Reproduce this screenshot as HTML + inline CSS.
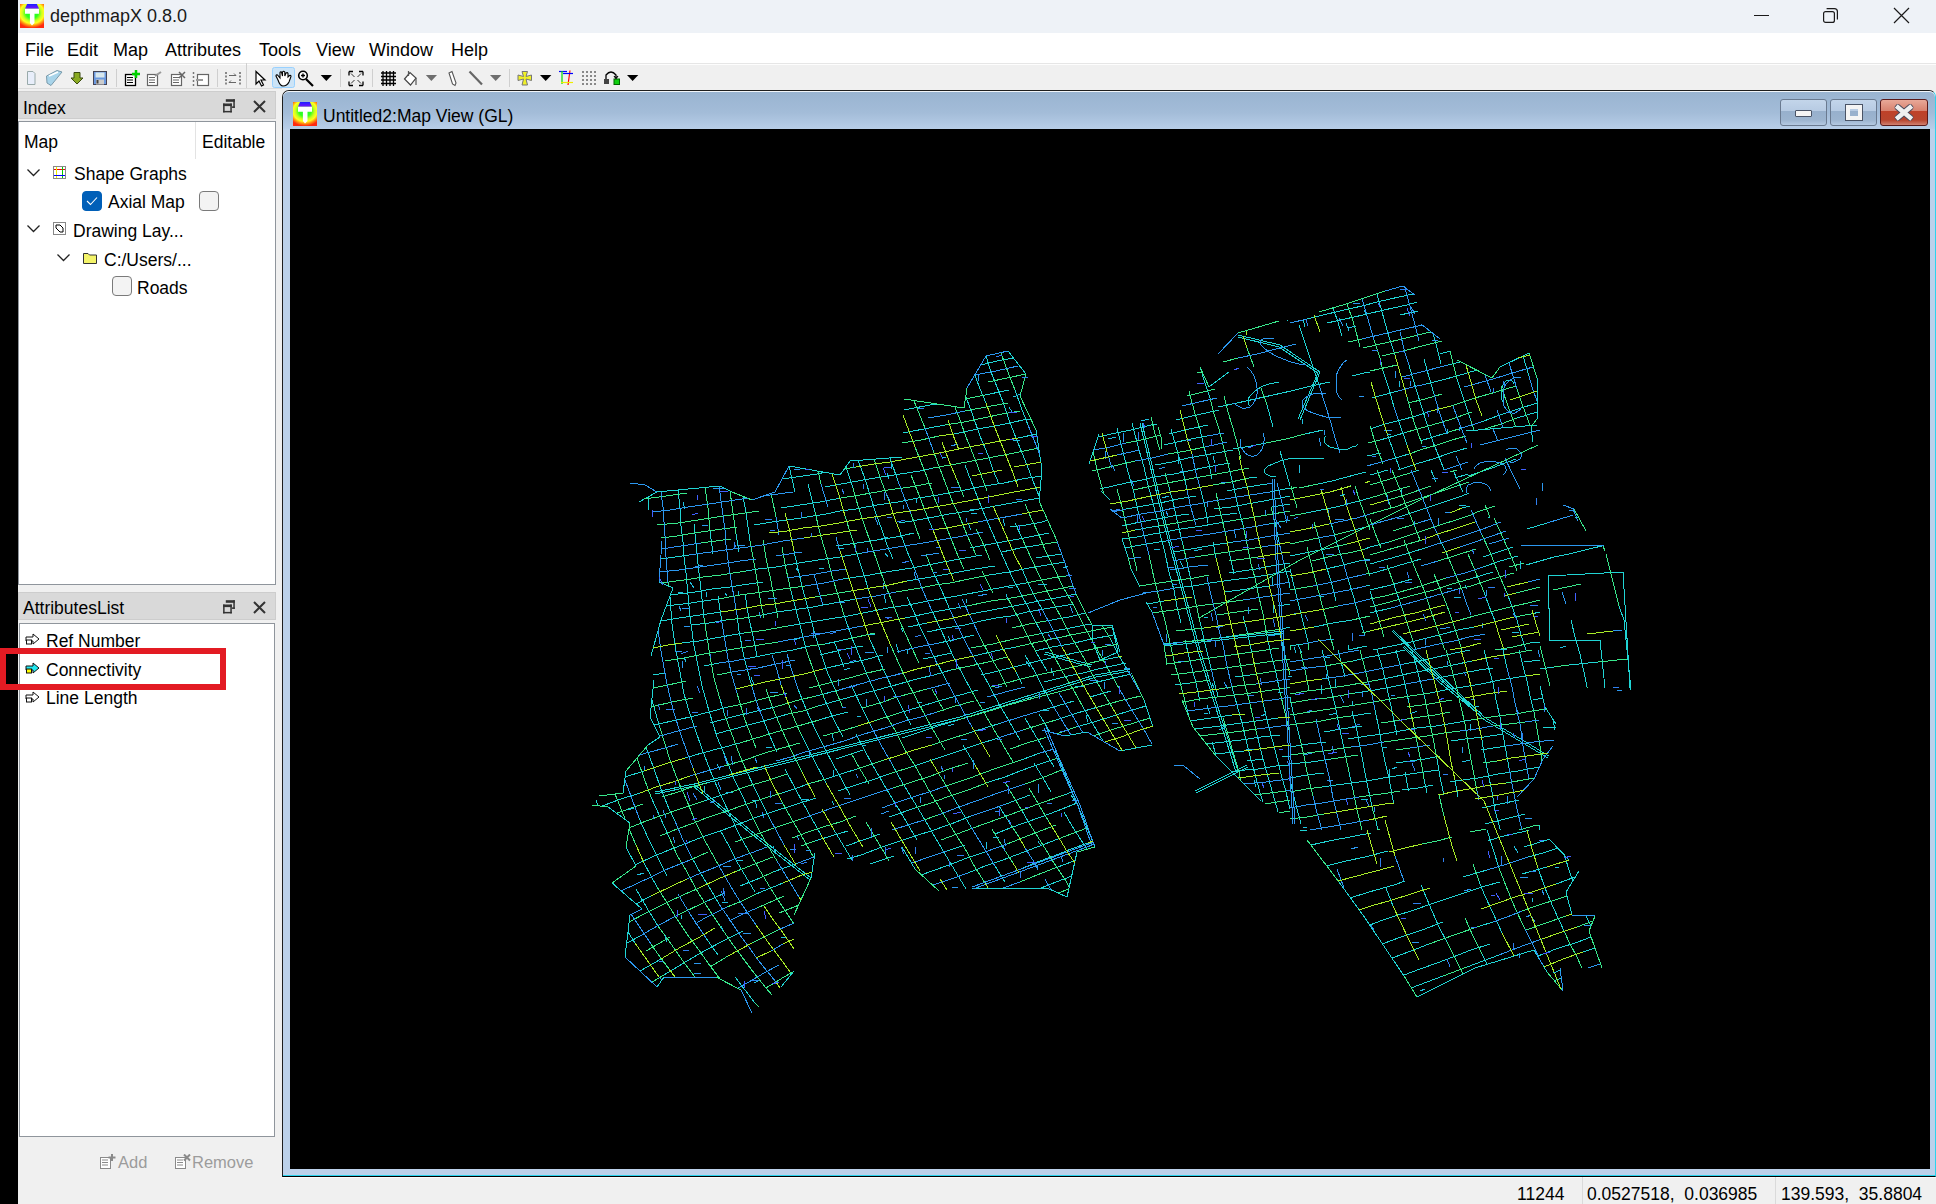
<!DOCTYPE html>
<html><head><meta charset="utf-8">
<style>
*{margin:0;padding:0;box-sizing:border-box}
html,body{width:1936px;height:1204px;overflow:hidden;background:#000;font-family:"Liberation Sans",sans-serif;color:#000}
.a{position:absolute}
.t{position:absolute;font-size:17.5px;line-height:20px;white-space:nowrap;color:#000}
.sep{position:absolute;top:69px;width:1px;height:18px;background:#d0d0d0}
.dd{position:absolute;top:75px;width:0;height:0;border-left:6px solid transparent;border-right:6px solid transparent;border-top:6px solid #000}
.ddg{border-top-color:#6e6e6e}
.chev{position:absolute;width:13px;height:8px}
.cb{position:absolute;width:20px;height:20px;border-radius:4px;border:1px solid #7a7a7a;background:#f3f3f3}
</style></head>
<body>
<!-- app background -->
<div class="a" style="left:18px;top:0;width:1918px;height:1204px;background:#f0f0f0"></div>
<!-- title bar -->
<div class="a" style="left:18px;top:0;width:1918px;height:33px;background:#eef2f7"></div>
<svg class="a" style="left:20px;top:4px" width="24" height="24" viewBox="0 0 24 24"><defs><radialGradient id="ig" gradientUnits="userSpaceOnUse" cx="12" cy="9" r="15" gradientTransform="translate(12 9) scale(1.15 1) translate(-12 -9)"><stop offset="0" stop-color="#20ff20"/><stop offset="0.35" stop-color="#30ff20"/><stop offset="0.55" stop-color="#c8ff20"/><stop offset="0.7" stop-color="#ffff20"/><stop offset="0.85" stop-color="#ff8a10"/><stop offset="1" stop-color="#ff2a10"/></radialGradient><linearGradient id="ip" x1="0" y1="0" x2="0" y2="1"><stop offset="0" stop-color="#1a20ff"/><stop offset="1" stop-color="#7a10ff"/></linearGradient></defs><rect width="24" height="24" fill="url(#ig)"/><path d="M7.1 0H16.9L19 4.8H5Z" fill="url(#ip)"/><path d="M5 4.8H19V9.7H14.5V19L12 21.5L9.9 19V9.7H5Z" fill="#fff"/></svg>
<div class="t" style="left:50px;top:6px;font-size:18px;color:#1a1a1a">depthmapX 0.8.0</div>
<div class="a" style="left:1754px;top:15px;width:15px;height:1px;background:#1a1a1a"></div>
<svg class="a" style="left:1822px;top:7px" width="17" height="17" viewBox="0 0 17 17"><rect x="1.6" y="4.6" width="10.8" height="10.8" rx="2" fill="none" stroke="#1a1a1a" stroke-width="1.2"/><path d="M4.6 1.6H12.4Q15.4 1.6 15.4 4.6V12.4" fill="none" stroke="#1a1a1a" stroke-width="1.2"/></svg>
<svg class="a" style="left:1893px;top:7px" width="17" height="17" viewBox="0 0 17 17"><path d="M1 1L16 16M16 1L1 16" stroke="#1a1a1a" stroke-width="1.2"/></svg>
<!-- menu bar -->
<div class="a" style="left:18px;top:33px;width:1918px;height:31px;background:#fff"></div>
<div class="t" style="left:25px;top:40px;font-size:18px">File</div>
<div class="t" style="left:67px;top:40px;font-size:18px">Edit</div>
<div class="t" style="left:113px;top:40px;font-size:18px">Map</div>
<div class="t" style="left:165px;top:40px;font-size:18px">Attributes</div>
<div class="t" style="left:259px;top:40px;font-size:18px">Tools</div>
<div class="t" style="left:316px;top:40px;font-size:18px">View</div>
<div class="t" style="left:369px;top:40px;font-size:18px">Window</div>
<div class="t" style="left:451px;top:40px;font-size:18px">Help</div>
<!-- toolbar -->
<div class="a" style="left:18px;top:63px;width:1918px;height:1px;background:#e6e6e6"></div><div class="a" style="left:18px;top:64px;width:1918px;height:1px;background:#fdfdfd"></div><div class="a" style="left:18px;top:88px;width:264px;height:1px;background:#dcdcdc"></div>
<svg class="a" style="left:0;top:60px" width="660" height="32" viewBox="0 60 660 32">
<!-- new doc -->
<path d="M27.5 71.5H33L35 73.5V84.5H27.5Z" fill="#e8eefa" stroke="#9aa" stroke-width="1"/>
<!-- open folder -->
<path d="M46.5 76L57 70.5L62 72L51 85.5L47 83Z" fill="#a8d4ea" stroke="#7a9aaa" stroke-width="1"/>
<path d="M49 76L58 72" stroke="#fff" stroke-width="1.5"/>
<!-- green arrow -->
<path d="M74 72.5H80V78H83L77 84L71 78H74Z" fill="#8aaa22" stroke="#3a4a10" stroke-width="1"/>
<!-- floppy -->
<rect x="93.5" y="71.5" width="13" height="13" fill="#6c9ae0" stroke="#445" stroke-width="1"/>
<rect x="95.5" y="72.5" width="9" height="5" fill="#d8e8ee"/>
<rect x="96" y="79.5" width="8" height="5" fill="#ccc"/>
<rect x="96.5" y="80" width="2" height="3.5" fill="#444"/>
<line x1="116.5" y1="69" x2="116.5" y2="87" stroke="#cfcfcf"/>
<!-- doc + -->
<rect x="125.5" y="74.5" width="10" height="11" fill="#fff" stroke="#000" stroke-width="1.3"/>
<path d="M127 77.5H133M127 80H133M127 82.5H133" stroke="#000" stroke-width="1"/>
<path d="M136 70V78M132 74H140" stroke="#00d000" stroke-width="2.5"/>
<!-- doc edit -->
<rect x="147.5" y="74.5" width="10" height="11" fill="#fff" stroke="#666" stroke-width="1.2"/>
<path d="M149 77.5H155M149 80H155M149 82.5H155" stroke="#666" stroke-width="1"/>
<path d="M155 76L161 72" stroke="#999" stroke-width="2"/>
<!-- doc delete -->
<rect x="171.5" y="74.5" width="10" height="11" fill="#fff" stroke="#666" stroke-width="1.2"/>
<path d="M173 77.5H179M173 80H179M173 82.5H179" stroke="#666" stroke-width="1"/>
<path d="M179 72L185 78M185 72L179 78" stroke="#666" stroke-width="1.5"/>
<!-- import -->
<path d="M193.5 72V86" stroke="#777" stroke-width="1.5" stroke-dasharray="2 2"/>
<rect x="197.5" y="74.5" width="11" height="11" fill="#fff" stroke="#666" stroke-width="1.2"/>
<path d="M196 80H203" stroke="#999" stroke-width="2"/>
<line x1="217.5" y1="69" x2="217.5" y2="87" stroke="#cfcfcf"/>
<!-- dotted arrows -->
<path d="M226 72V86M240 72V86" stroke="#666" stroke-width="1.5" stroke-dasharray="2 1.5"/>
<path d="M229 75.5H236L234 73.5M229 82.5H236M229 82.5L231 80.5" fill="none" stroke="#666" stroke-width="1"/>
<line x1="246.5" y1="63" x2="246.5" y2="88" stroke="#cfcfcf"/>
<!-- pointer -->
<path d="M256 71.5V84L259 81L261.5 86L263.5 85L261 80H265Z" fill="#fff" stroke="#000" stroke-width="1.2"/>
<!-- hand highlight -->
<rect x="272.5" y="67.5" width="22" height="20" rx="2" fill="#cce4f7" stroke="#99d1ff"/>
<path d="M278 80L276 76Q276 74.5 277.5 75L280 78V73Q280 71.5 281.5 72L282.5 76V72Q283.5 70.5 284.8 72V76L286 73Q287.5 72 288 73.5V77L289.5 75.5Q291 75 291 76.5L289 82Q287 86 283 86Q280 86 278 80Z" fill="#fff" stroke="#000" stroke-width="1.1"/>
<!-- magnifier -->
<circle cx="303" cy="75.5" r="4.3" fill="#fff" stroke="#000" stroke-width="1.6"/>
<path d="M301 75.5H305M303 73.5V77.5" stroke="#000" stroke-width="1.4"/>
<path d="M306 79L313 86" stroke="#000" stroke-width="2.2"/>
<path d="M320.7 75H332L326.3 81Z" fill="#000"/>
<line x1="340.5" y1="69" x2="340.5" y2="87" stroke="#cfcfcf"/>
<!-- fit -->
<path d="M349 71.5H353M349 71.5V75.5M363 71.5H359M363 71.5V75.5M349 85.5H353M349 85.5V81.5M363 85.5H359M363 85.5V81.5" fill="none" stroke="#000" stroke-width="1.3"/>
<path d="M351 73.5L354.5 77M361 73.5L357.5 77M351 83.5L354.5 80M361 83.5L357.5 80" stroke="#333" stroke-width="1"/>
<line x1="372.5" y1="69" x2="372.5" y2="87" stroke="#cfcfcf"/>
<!-- grid -->
<path d="M383 71V86M386.5 71V86M390 71V86M393.5 71V86M381 73H396M381 76.5H396M381 80H396M381 83.5H396" stroke="#000" stroke-width="1.3"/>
<!-- bucket -->
<path d="M404.5 79L410 72.5L416 78L410.5 85Z" fill="#fff" stroke="#444" stroke-width="1.2"/>
<path d="M408.5 71V76M416 78V85" stroke="#555" stroke-width="1.2"/>
<path d="M425.8 75H437L431.4 81Z" fill="#6e6e6e"/>
<!-- pencil -->
<path d="M449 73L452 71.5L456 83L455 85.5L452.5 84Z" fill="#fff" stroke="#555" stroke-width="1.1"/>
<!-- line -->
<path d="M469.5 71.5L482 84.5" stroke="#666" stroke-width="2.2"/>
<path d="M490 75H501.4L495.7 81Z" fill="#6e6e6e"/>
<line x1="509.5" y1="69" x2="509.5" y2="87" stroke="#cfcfcf"/>
<!-- yellow cross -->
<path d="M522 71.5H527.5L526 76.5L531.5 75V80.5L526 79L527.5 85H522L523.5 79L518 80.5V75L523.5 76.5Z" fill="#f0f028" stroke="#777" stroke-width="1"/>
<path d="M540 75H551.4L545.7 81Z" fill="#000"/>
<!-- axial icon -->
<path d="M559 71.5H567" stroke="#00f" stroke-width="1.2"/><path d="M562 71V84" stroke="#0d0" stroke-width="1.2"/>
<path d="M570 70.5L568 85" stroke="#f00" stroke-width="1.2"/><path d="M561 82.5H573" stroke="#ee0" stroke-width="1.2"/><path d="M563 73.5H573" stroke="#00f" stroke-width="1.2"/>
<!-- dotted grid -->
<g fill="#888"><rect x="582" y="71" width="2" height="2"/><rect x="586" y="71" width="2" height="2"/><rect x="590" y="71" width="2" height="2"/><rect x="594" y="71" width="2" height="2"/>
<rect x="582" y="75" width="2" height="2"/><rect x="586" y="75" width="2" height="2"/><rect x="590" y="75" width="2" height="2"/><rect x="594" y="75" width="2" height="2"/>
<rect x="582" y="79" width="2" height="2"/><rect x="586" y="79" width="2" height="2"/><rect x="590" y="79" width="2" height="2"/><rect x="594" y="79" width="2" height="2"/>
<rect x="582" y="83" width="2" height="2"/><rect x="586" y="83" width="2" height="2"/><rect x="590" y="83" width="2" height="2"/><rect x="594" y="83" width="2" height="2"/></g>
<!-- link -->
<rect x="604" y="79" width="5" height="5" fill="#444"/><rect x="614" y="79" width="5.5" height="5.5" fill="#10d010" stroke="#060"/>
<path d="M606 79V75Q611 69 616 75V78" fill="none" stroke="#000" stroke-width="1.3"/>
<path d="M614 76L616 78.5L618 76" fill="none" stroke="#000" stroke-width="1.2"/>
<path d="M627 75H638.3L632.6 81Z" fill="#000"/>
</svg>


<!-- Index dock -->
<div class="a" style="left:18px;top:91px;width:258px;height:28px;background:#d9d9d9;border:1px solid #cdcdcd"></div>
<div class="t" style="left:23px;top:98px">Index</div>
<svg class="a" style="left:222px;top:98px" width="14" height="16" viewBox="0 0 14 16"><g fill="#333"><rect x="3.8" y="1.2" width="9" height="2.6"/><rect x="11.3" y="1.2" width="1.5" height="8.7"/><rect x="9.8" y="8.4" width="3" height="1.5"/><rect x="1.1" y="5.5" width="8.7" height="2.6"/><rect x="1.1" y="5.5" width="1.5" height="8.9"/><rect x="8.3" y="5.5" width="1.5" height="8.9"/><rect x="1.1" y="12.9" width="8.7" height="1.5"/></g></svg>
<svg class="a" style="left:253px;top:100px" width="13" height="13" viewBox="0 0 13 13"><path d="M1 1L12 12M12 1L1 12" stroke="#333" stroke-width="2"/></svg>
<div class="a" style="left:18px;top:121px;width:258px;height:464px;background:#fff;border:1px solid #8f959c"></div>
<div class="a" style="left:195px;top:122px;width:1px;height:37px;background:#e3e3e3"></div>
<div class="t" style="left:24px;top:132px">Map</div>
<div class="t" style="left:202px;top:132px">Editable</div>
<svg class="chev" style="left:27px;top:169px" viewBox="0 0 13 8"><path d="M0.5 0.5L6.5 6.5L12.5 0.5" fill="none" stroke="#222" stroke-width="1.3"/></svg>
<svg class="a" style="left:53px;top:166px" width="13" height="13" viewBox="0 0 13 13"><rect x="0.5" y="0.5" width="12" height="12" fill="#fff" stroke="#888"/><path d="M1 3.5H12M1 9.5H12" stroke="#e00" stroke-width="1"/><path d="M3.5 1V12" stroke="#ee0" /><path d="M9.5 1V12" stroke="#0c0"/><path d="M1 9.5H12" stroke="#00f"/></svg>
<div class="t" style="left:74px;top:164px">Shape Graphs</div>
<div class="cb" style="left:82px;top:191px;background:#005fb8;border-color:#005fb8"></div>
<svg class="a" style="left:86px;top:196px" width="12" height="10" viewBox="0 0 12 10"><path d="M1 5L4.5 8.5L11 1.5" fill="none" stroke="#fff" stroke-width="1.1"/></svg>
<div class="t" style="left:108px;top:192px">Axial Map</div>
<div class="cb" style="left:199px;top:191px"></div>
<svg class="chev" style="left:27px;top:225px" viewBox="0 0 13 8"><path d="M0.5 0.5L6.5 6.5L12.5 0.5" fill="none" stroke="#222" stroke-width="1.3"/></svg>
<svg class="a" style="left:53px;top:222px" width="13" height="13" viewBox="0 0 13 13"><rect x="0.5" y="0.5" width="12" height="12" fill="#fff" stroke="#888"/><path d="M3 3H7L10 6V10H7L3 6Z" fill="none" stroke="#000" stroke-width="1"/></svg>
<div class="t" style="left:73px;top:221px">Drawing Lay...</div>
<svg class="chev" style="left:57px;top:254px" viewBox="0 0 13 8"><path d="M0.5 0.5L6.5 6.5L12.5 0.5" fill="none" stroke="#222" stroke-width="1.3"/></svg>
<svg class="a" style="left:83px;top:252px" width="15" height="12" viewBox="0 0 15 12"><path d="M0.5 1.5H5L6.5 3H13.5V11.5H0.5Z" fill="#f4f46a" stroke="#333"/></svg>
<div class="t" style="left:104px;top:250px">C:/Users/...</div>
<div class="cb" style="left:112px;top:276px"></div>
<div class="t" style="left:137px;top:278px">Roads</div>

<!-- Attributes dock -->
<div class="a" style="left:18px;top:592px;width:258px;height:28px;background:#d9d9d9;border:1px solid #cdcdcd"></div>
<div class="t" style="left:23px;top:598px">AttributesList</div>
<svg class="a" style="left:222px;top:599px" width="14" height="16" viewBox="0 0 14 16"><g fill="#333"><rect x="3.8" y="1.2" width="9" height="2.6"/><rect x="11.3" y="1.2" width="1.5" height="8.7"/><rect x="9.8" y="8.4" width="3" height="1.5"/><rect x="1.1" y="5.5" width="8.7" height="2.6"/><rect x="1.1" y="5.5" width="1.5" height="8.9"/><rect x="8.3" y="5.5" width="1.5" height="8.9"/><rect x="1.1" y="12.9" width="8.7" height="1.5"/></g></svg>
<svg class="a" style="left:253px;top:601px" width="13" height="13" viewBox="0 0 13 13"><path d="M1 1L12 12M12 1L1 12" stroke="#333" stroke-width="2"/></svg>
<div class="a" style="left:19px;top:623px;width:256px;height:514px;background:#fff;border:1px solid #8f959c"></div>
<svg class="a" style="left:25px;top:633px" width="15" height="13" viewBox="0 0 15 13"><path d="M1 4H8V1L14 6L8 11V8H1Z" fill="#fff" stroke="#111" stroke-width="1"/><rect x="1.5" y="7" width="5" height="4" fill="#fff" stroke="#111"/></svg>
<div class="t" style="left:46px;top:631px">Ref Number</div>
<svg class="a" style="left:25px;top:662px" width="15" height="13" viewBox="0 0 15 13"><path d="M1 4H8V1L14 6L8 11V8H1Z" fill="#22e8f0" stroke="#111" stroke-width="1"/><rect x="1.5" y="7" width="5" height="4" fill="#ff0" stroke="#111"/></svg>
<div class="t" style="left:46px;top:660px">Connectivity</div>
<svg class="a" style="left:25px;top:691px" width="15" height="13" viewBox="0 0 15 13"><path d="M1 4H8V1L14 6L8 11V8H1Z" fill="#fff" stroke="#111" stroke-width="1"/><rect x="1.5" y="7" width="5" height="4" fill="#fff" stroke="#111"/></svg>
<div class="t" style="left:46px;top:688px">Line Length</div>
<!-- Add / Remove -->
<svg class="a" style="left:100px;top:1154px" width="16" height="16" viewBox="0 0 16 16"><rect x="0.5" y="3.5" width="10" height="11" fill="#fff" stroke="#8a8a8a"/><path d="M2 6H8M2 8.5H8M2 11H8" stroke="#8a8a8a"/><path d="M12 0V7M8.5 3.5H15.5" stroke="#8a8a8a" stroke-width="2"/></svg>
<div class="t" style="left:118px;top:1152px;color:#9c9c9c;font-size:16.5px">Add</div>
<svg class="a" style="left:175px;top:1154px" width="16" height="16" viewBox="0 0 16 16"><rect x="0.5" y="3.5" width="10" height="11" fill="#fff" stroke="#8a8a8a"/><path d="M2 6H8M2 8.5H8M2 11H8" stroke="#8a8a8a"/><path d="M9 0.5L15 6.5M15 0.5L9 6.5" stroke="#8a8a8a" stroke-width="2"/></svg>
<div class="t" style="left:192px;top:1152px;color:#9c9c9c;font-size:16.5px">Remove</div>

<!-- MDI window -->
<div class="a" style="left:282px;top:90px;width:1654px;height:1087px;background:#bcd1ea;border-left:1px solid #1e1e1e;border-top:1px solid #1e1e1e;border-right:1px solid #2ad4ee;border-bottom:1px solid #000;border-radius:7px 7px 0 0"></div><div class="a" style="left:283px;top:1175px;width:1653px;height:1px;background:#2ad4ee"></div>
<div class="a" style="left:283px;top:91px;width:1652px;height:38px;background:linear-gradient(#99b4d1,#a3bcd8 55%,#b8cee8);border-radius:6px 6px 0 0;border-top:1px solid #f2f6fa"></div>
<svg class="a" style="left:293px;top:102px" width="24" height="24" viewBox="0 0 24 24"><rect width="24" height="24" fill="url(#ig)"/><path d="M7.1 0H16.9L19 4.8H5Z" fill="url(#ip)"/><path d="M5 4.8H19V9.7H14.5V19L12 21.5L9.9 19V9.7H5Z" fill="#fff"/></svg>
<div class="t" style="left:323px;top:106px">Untitled2:Map View (GL)</div>
<!-- mdi buttons -->
<div class="a" style="left:1780px;top:99px;width:47px;height:27px;border:1px solid #6a7a90;border-radius:3px;background:linear-gradient(#c3d5ea 0%,#b7cbe3 42%,#97b0cc 43%,#9cb4cf 80%,#b4c9e2 100%)"></div>
<div class="a" style="left:1795px;top:110px;width:17px;height:7px;background:#f4f4f4;border:1px solid #4a5466;border-radius:1px"></div>
<div class="a" style="left:1830px;top:99px;width:47px;height:27px;border:1px solid #6a7a90;border-radius:3px;background:linear-gradient(#c3d5ea 0%,#b7cbe3 42%,#97b0cc 43%,#9cb4cf 80%,#b4c9e2 100%)"></div>
<div class="a" style="left:1846px;top:105px;width:16px;height:15px;border:4px solid #f4f4f4;outline:1px solid #4a5466"></div>
<div class="a" style="left:1880px;top:99px;width:48px;height:27px;border:1px solid #5a1a1a;border-radius:3px;background:linear-gradient(#e8a898 0%,#d88370 42%,#bf4128 43%,#b8452e 80%,#d08070 100%)"></div>
<svg class="a" style="left:1893px;top:104px" width="22" height="17" viewBox="0 0 22 17"><path d="M5 3.5L17 13.5M17 3.5L5 13.5" stroke="#4a4a5a" stroke-width="6.5" stroke-linecap="round"/><path d="M5 3.5L17 13.5M17 3.5L5 13.5" stroke="#f0f0f0" stroke-width="4.5" stroke-linecap="square"/></svg>
<div class="a" style="left:290px;top:129px;width:1640px;height:1040px;background:#000"></div>

<!-- status bar -->
<div class="a" style="left:282px;top:1177px;width:1654px;height:1px;background:#fdfdfd"></div>
<div class="a" style="left:1582px;top:1177px;width:1px;height:27px;background:#dadada"></div>
<div class="a" style="left:1775px;top:1177px;width:1px;height:27px;background:#dadada"></div>
<div class="t" style="left:1517px;top:1184px">11244</div>
<div class="t" style="left:1587px;top:1184px">0.0527518,&nbsp; 0.036985</div>
<div class="t" style="left:1781px;top:1184px">139.593,&nbsp; 35.8804</div>

<svg class="a" style="left:0;top:0" width="1936" height="1204" viewBox="0 0 1936 1204"><g fill="none" stroke-width="1" shape-rendering="crispEdges"><path stroke="#20d4d4" d="M981 365L997 361L1013 358M904 410L930 405M930 405L937 404M985 395L1009 390M903 433L929 428M929 428L945 425M954 434L978 429M978 429L1005 424M1005 424L1023 420M1023 420L1031 419M782 479L803 476M803 476L817 474M817 474L826 472M1018 438L1037 434M825 487L847 483L869 479M869 479L894 475M894 475L920 471M920 471L933 468M781 508L800 505L820 502M820 502L841 498M754 525L772 522M772 522L801 518M801 518L826 514M826 514L840 511M840 511L856 509M856 509L877 505L898 502M898 502L918 498L938 495M938 495L965 490M965 490L984 486L1004 483M1004 483L1022 479M1022 479L1041 476M661 559L689 555M899 523L912 521M912 521L934 517M934 517L949 514M949 514L969 511M969 511L995 506M995 506L1012 503M1012 503L1039 498M836 546L857 543L877 540M877 540L896 537L914 533M746 571L758 569M758 569L776 567L793 564M793 564L818 560M818 560L840 557L862 553M1010 527L1026 525L1042 522M1042 522L1048 520M670 595L695 592M695 592L712 589L730 587M730 587L742 585M742 585L763 582M970 548L996 543M996 543L1019 539M1019 539L1034 536L1049 533M666 606L691 603M691 603L704 601M704 601L719 599M843 579L870 575M870 575L886 572M886 572L912 568M912 568L938 563M938 563L960 559L982 555M1002 552L1020 548L1039 545M661 621L679 618M679 618L700 615L721 612M907 581L931 577M931 577L954 573M954 573L975 569L995 566M1036 558L1061 554M692 625L709 623L726 620M762 615L777 612L792 610M792 610L813 607L834 603M834 603L855 599M989 575L1009 572L1029 568M1029 568L1059 563M1059 563L1064 562M682 643L699 641L715 638M715 638L744 633M788 626L805 623L823 620M823 620L848 616M848 616L868 612L888 608M888 608L908 605L928 601M928 601L957 596M957 596L983 591M983 591L1004 587L1026 583M1066 576L1069 575M905 618L934 612M934 612L950 609L967 606M653 675L665 673M704 666L719 663M750 658L775 653M775 653L793 650M793 650L810 646M825 644L848 639M908 627L927 623M971 614L992 610M992 610L1014 606M1014 606L1034 602M1034 602L1056 598M1056 598L1076 594M820 655L841 650L863 646M927 632L946 628L965 625M965 625L981 621M981 621L996 618L1011 616M1011 616L1027 612M1027 612L1056 607M1056 607L1074 604M823 669L844 664M844 664L864 660L883 655M939 643L957 639L974 635M1046 621L1069 617M1069 617L1085 613M1085 613L1086 613M654 725L672 721L690 717M690 717L709 712L728 707M923 659L952 653M1039 634L1054 631L1070 628M1070 628L1085 625M1085 625L1091 624M710 723L732 717M732 717L753 712L775 707M816 696L839 690M974 656L995 651L1016 647M715 734L734 729M734 729L752 724M752 724L764 721M764 721L788 714M818 706L836 701L854 696M854 696L873 691L892 686M892 686L913 680L934 675M934 675L951 670M1035 651L1052 647L1070 644M1070 644L1087 640M1087 640L1113 635M1113 635L1115 634M625 777L644 771M685 758L702 753M702 753L721 748L740 743M819 720L832 716M832 716L848 712M981 675L994 672M994 672L1014 667L1034 662M1034 662L1060 656M1060 656L1084 651M602 806L621 799L640 793M899 713L919 707M919 707L935 702M935 702L960 695M960 695L978 690M1103 660L1118 657M1044 682L1068 676M1068 676L1083 673L1098 669M1098 669L1126 663M704 801L731 792M836 759L863 750M902 738L920 732L938 726M938 726L958 720M1089 684L1110 679L1131 674M1131 674L1131 673M782 793L797 788L811 783M826 779L841 774M841 774L857 769M969 733L985 728L1001 723M1040 711L1057 706L1074 701M1090 697L1111 691M635 865L652 857L669 850M669 850L687 843L705 836M705 836L720 831M720 831L739 824M739 824L757 817M757 817L775 811L794 805M794 805L816 798M838 791L856 785M856 785L872 780L889 774M911 767L935 759M935 759L956 752L976 745M976 745L998 738M1056 720L1077 713L1098 707M1076 727L1094 722L1113 716M1113 716L1129 711L1146 706M636 904L651 896M1021 760L1040 753M815 841L831 836L848 831M889 817L915 808M989 782L1005 777L1020 771M1020 771L1034 766M1034 766L1052 760M627 943L640 936M705 902L725 893M740 886L760 878M773 872L798 863M846 846L863 840L880 834M756 894L783 883M847 859L861 855M861 855L882 847M882 847L900 841L918 835M918 835L931 831M931 831L951 824L971 816M1006 804L1030 795M640 971L661 959M870 864L894 856M1064 795L1072 792M664 975L687 961M687 961L706 950L725 940M725 940L743 931M947 851L965 845M995 834L1010 828L1024 823M1024 823L1041 817L1057 811M1057 811L1077 803M921 875L949 865M949 865L967 858L985 852M968 873L985 866M985 866L1003 860M1003 860L1016 855M1016 855L1037 847L1058 839M1021 869L1037 862L1054 856M1054 856L1071 849L1088 843M1055 868L1074 861M1041 888L1056 882L1072 876M628 932L635 943M613 882L615 886M596 800L598 806M636 889L647 908L658 926M644 863L657 887M639 818L648 838L658 858M658 858L667 876M706 938L718 955M735 977L745 990L755 1003M651 797L660 817L669 837M646 747L654 769M654 769L661 789L669 809M669 809L675 821M692 858L701 874L711 890M711 890L719 904M652 700L660 728M648 497L649 510M720 830L729 846L737 862M737 862L746 877L755 892M670 597L672 624M672 624L676 651M676 651L680 672L684 694M684 694L689 711L695 729M695 729L702 749L710 770M710 770L720 794M720 794L733 821M733 821L738 832M738 832L748 850M678 490L680 508L681 526M681 526L683 542L684 557M684 557L686 573M686 573L688 595L690 616M690 616L694 646M694 646L698 666L702 686M702 686L709 711M709 711L717 737M717 737L723 751L729 766M729 766L734 779M734 779L742 795L749 810M694 524L696 544L698 564M698 564L700 581L702 599M702 599L704 618M720 699L725 716M747 772L755 789M755 789L764 807M764 807L770 819M710 531L713 554M718 596L722 623M737 615L739 631M739 631L744 657M744 657L748 672L752 687M763 719L772 741M772 741L777 752M785 769L796 790M796 790L803 803M803 803L812 819L821 835M736 534L739 552M745 594L749 619M749 619L753 636M753 636L757 656M834 830L843 845L852 860M743 497L746 512L748 527M748 527L750 541M802 736L813 758M813 758L826 783M798 689L806 709L815 729M815 729L824 747L834 766M834 766L842 780L850 795M791 591L796 610M796 610L801 629L806 649M824 698L833 718L843 737M794 551L798 569L802 586M802 586L806 601L810 616M810 616L816 638L823 659M823 659L828 674L835 689M856 734L864 749L872 764M872 764L883 783M883 783L893 800L903 816M903 816L917 840M789 466L795 492M834 641L844 667M851 685L863 710M863 710L871 726M892 764L902 782L913 800M913 800L922 815M922 815L932 832L942 849M942 849L954 869M954 869L966 889M808 484L815 512M844 615L852 638M852 638L861 660M861 660L868 677L876 695M876 695L887 717M870 640L877 655L884 671M884 671L895 694M895 694L903 710L911 725M953 797L965 817M965 817L971 827M995 866L1005 882M857 554L863 572L869 591M846 467L853 488M963 745L975 765M999 806L1011 825M858 460L865 479L871 498M871 498L876 514L882 530M882 530L887 545L893 559M907 597L914 612L920 627M920 627L926 639M933 655L946 680M1021 809L1029 823M900 532L907 551L915 570M932 611L940 628L948 645M948 645L955 660L963 675M963 675L971 690M890 458L898 481M933 572L942 591L950 610M975 660L982 672M982 672L990 687L998 702M998 702L1009 721L1020 740M1034 763L1043 778L1051 792M1064 812L1072 826L1081 840M1081 840L1087 849M927 516L933 530M1025 718L1035 735L1046 753M1046 753L1054 767M1071 795L1079 807M1016 672L1022 684M1039 714L1050 732M1025 655L1035 672M1035 672L1043 688L1052 704M1036 652L1047 671M965 465L971 481L977 496M977 496L983 511M983 511L988 523M988 523L996 541L1004 559M1004 559L1012 577L1021 594M1021 594L1030 611M1030 611L1043 636M1083 707L1090 719M1090 719L1103 741M1022 569L1028 583L1035 597M1035 597L1042 609M966 397L973 416M973 416L980 436L988 455M988 455L993 470L999 484M1015 523L1022 538M975 375L980 389L986 403M986 356L991 372L997 387M997 387L1003 402L1008 417M1008 417L1014 433L1020 448M1020 448L1027 465L1033 481M1033 481L1039 496M1111 640L1119 656M1119 656L1127 669M1015 390L1021 407L1028 425M1287 321L1287 320M1098 437L1111 434M1111 434L1131 430L1151 425M1151 425L1157 424M1176 420L1192 416M1192 416L1206 413M1206 413L1219 410M1169 434L1189 429L1208 425M1164 445L1186 440L1207 436M1155 465L1172 462L1188 458M1188 458L1205 455M1205 455L1233 450M1100 489L1126 483M1126 483L1142 480M1142 480L1154 477M1154 477L1174 474M1174 474L1188 471M1188 471L1207 467M1207 467L1230 463M1249 478L1257 477M1126 509L1143 506L1160 503M1160 503L1178 499L1196 496M1227 491L1247 487L1267 484M1270 492L1290 488M1122 526L1140 522L1157 519M1157 519L1173 516L1189 514M1214 509L1231 507L1247 504M1247 504L1264 501L1280 498M1280 498L1290 496M1135 530L1158 526M1193 520L1215 516L1237 513M1272 507L1290 504M1122 539L1137 537M1137 537L1159 533L1181 529M1181 529L1202 526M1202 526L1230 521M1125 548L1146 544L1166 541M1269 524L1290 520M1174 552L1191 549L1208 546M1208 546L1233 542M1229 573L1256 569M1256 569L1276 565M1276 565L1290 563M1175 588L1193 586L1210 583M1210 583L1231 580M1231 580L1248 578M1248 578L1261 576M1261 576L1290 571M1147 604L1164 601M1225 592L1247 589L1269 586M1278 606L1290 604M1219 638L1239 635M1282 629L1290 627M1175 685L1190 683M1235 677L1250 675M1190 721L1211 718L1232 715M1287 708L1290 708M1195 729L1220 726M1220 726L1234 724M1234 724L1256 721L1278 718M1207 744L1224 742L1241 740M1241 740L1261 737L1280 735M1215 754L1244 751M1247 761L1264 759M1282 757L1290 756M1232 772L1245 770M1245 770L1258 769M1258 769L1276 766M1276 766L1290 765M1288 779L1290 778M1117 428L1122 448L1127 468M1127 468L1133 489M1133 489L1139 515M1186 705L1189 717M1132 423L1139 450M1139 450L1144 467L1148 485M1148 485L1153 503L1158 522M1158 522L1160 534M1160 534L1165 553M1165 553L1169 572L1174 590M1174 590L1177 607L1181 623M1185 640L1190 661L1196 683M1196 683L1200 701M1212 742L1216 755M1169 487L1173 502M1173 502L1178 524L1183 545M1187 562L1191 581L1195 599M1200 622L1206 648M1206 648L1211 668M1214 681L1218 696M1171 429L1177 450L1183 471M1183 471L1187 490M1232 687L1237 705L1242 723M1242 723L1246 740L1250 756M1250 756L1255 774L1260 793M1260 793L1263 802M1201 491L1205 507L1208 523M1213 542L1216 558M1257 735L1261 751L1265 766M1265 766L1271 787L1277 808M1277 808L1278 812M1200 429L1204 447L1209 464M1209 464L1212 479M1229 551L1234 574M1243 616L1248 635L1252 653M1263 703L1268 724L1274 746M1274 746L1281 774M1281 774L1285 788M1285 788L1290 809M1200 367L1205 383L1210 398M1229 468L1234 488M1234 488L1238 507L1243 525M1267 636L1271 654M1271 654L1276 673L1280 692M1281 638L1287 663M1276 527L1279 542M1284 564L1288 578M1288 578L1290 588M1307 319L1319 316M1319 316L1340 311L1362 306M1362 306L1377 302M1377 302L1399 297M1399 297L1413 294M1327 323L1345 319L1363 315M1363 315L1384 310M1384 310L1407 305M1407 305L1417 302M1400 315L1418 311M1440 354L1450 351M1448 365L1460 362M1372 398L1398 391M1426 384L1442 380L1457 376M1457 376L1477 370M1370 429L1385 424L1401 420M1401 420L1416 416L1431 411M1380 440L1394 436M1394 436L1407 432M1367 456L1381 453M1420 441L1446 433M1481 422L1500 415L1518 409M1518 409L1537 403M1392 459L1409 454M1517 418L1537 412M1398 470L1416 464L1433 459M1433 459L1450 453L1467 448M1303 319L1305 327M1333 308L1338 322M1338 322L1342 336M1388 436L1394 453L1400 470M1383 371L1389 389L1394 407M1398 419L1407 445M1377 294L1384 319M1384 319L1389 337L1395 355M1409 365L1413 379M1413 379L1421 405M1421 405L1427 424L1433 442M1433 442L1443 467M1443 467L1444 470M1424 359L1429 377L1434 394M1433 333L1438 352M1438 352L1441 364M1457 379L1464 400L1471 421M1523 356L1529 376M1306 513L1336 507M1336 507L1359 501M1359 501L1370 498M1350 531L1370 526M1290 556L1310 552L1330 548M1365 549L1370 547M1326 569L1343 565L1359 561M1359 561L1370 559M1366 586L1370 585M1314 627L1333 623L1352 620M1290 646L1303 644M1348 650L1367 646M1290 569L1294 586L1298 602M1298 602L1303 622L1308 642M1319 539L1325 562M1325 562L1331 581L1336 601M1348 645L1349 650M1331 523L1338 547M1338 547L1344 565M1348 579L1354 598M1354 598L1359 617L1365 636M1370 475L1388 470M1410 473L1419 470M1455 478L1468 474M1399 517L1420 510M1420 510L1441 503L1462 496M1462 496L1469 493M1462 508L1470 506M1370 547L1389 542M1488 517L1490 517M1370 564L1388 559L1406 554M1406 554L1428 547M1370 574L1397 566M1397 566L1421 559M1575 518L1578 517M1370 590L1391 585L1412 579M1483 557L1498 552L1513 547M1483 567L1500 561L1518 556M1470 579L1493 572M1370 613L1391 608M1373 650L1392 646L1411 642M1411 642L1427 638L1443 634M1443 634L1458 630L1474 627M1531 614L1540 612M1530 643L1540 642M1370 591L1378 617M1394 585L1402 608M1413 641L1416 650M1440 540L1446 552M1431 470L1436 482M1484 592L1489 606L1495 621M1453 470L1463 492M1507 593L1517 620M1517 620L1521 635L1526 650M1353 661L1369 657L1386 654M1386 654L1405 650M1404 664L1420 661L1437 657M1437 657L1460 652M1460 652L1470 650M1378 680L1393 677M1393 677L1411 673M1411 673L1433 669M1433 669L1453 665L1472 661M1355 693L1375 690M1375 690L1391 687L1406 684M1438 678L1458 674L1479 670M1479 670L1493 668M1524 662L1540 660M1430 693L1450 689M1450 689L1463 687M1463 687L1481 684L1500 680M1500 680L1526 676M1351 716L1371 713M1324 732L1341 729M1341 729L1362 726M1533 700L1543 698M1290 747L1308 744L1326 742M1348 739L1367 736M1367 736L1383 734M1383 734L1400 731L1417 728M1417 728L1436 726L1454 723M1454 723L1471 720M1290 764L1311 762L1331 759M1451 741L1465 739M1465 739L1484 737L1503 734M1543 728L1556 727M1290 778L1307 775L1324 773M1396 763L1410 761M1410 761L1425 759L1440 756M1481 750L1506 746M1322 787L1351 783M1351 783L1367 781L1383 778M1383 778L1403 775L1424 772M1424 772L1439 770M1402 790L1418 788L1433 785M1450 782L1463 780M1463 780L1478 778M1478 778L1498 774L1518 771M1518 771L1539 767M1482 808L1500 804L1519 800M1519 800L1519 800M1485 824L1505 819L1525 814M1290 780L1295 801M1295 801L1301 824M1290 697L1293 712L1297 727M1297 727L1300 739M1322 650L1326 665L1329 681M1329 681L1335 705M1335 705L1340 730M1340 730L1346 758M1349 772L1353 790M1338 650L1345 677M1352 711L1357 731L1361 752M1361 752L1366 778M1366 778L1372 807M1376 821L1378 830M1375 710L1379 729L1382 747M1382 747L1385 762L1389 778M1389 778L1393 800M1393 800L1394 803M1377 650L1383 670M1383 670L1389 697M1389 697L1392 711M1392 711L1397 735M1405 772L1408 788M1408 788L1408 791M1396 650L1400 665L1404 680M1404 680L1409 703M1424 779L1427 793M1412 650L1418 673M1418 673L1425 699M1437 759L1440 777L1444 795M1455 780L1458 797M1482 740L1484 753M1484 753L1488 773L1492 792M1492 792L1495 810L1500 829M1500 829L1500 830M1484 650L1488 666M1488 666L1493 683L1496 700M1496 700L1500 717L1503 735M1503 735L1506 751L1509 768M1503 650L1507 668M1539 825L1540 830M1519 650L1523 666L1527 681M1527 681L1530 696L1534 712M1553 720L1555 730M1300 831L1307 830M1311 845L1329 841M1329 841L1350 837L1371 833M1326 866L1346 861L1365 857M1365 857L1388 851M1488 841L1500 837M1500 837L1526 831M1526 831L1529 830M1350 898L1369 892M1369 892L1394 885M1394 885L1405 881M1524 847L1550 839M1463 877L1487 870M1528 857L1543 853L1558 848M1370 925L1383 920M1383 920L1395 916M1395 916L1414 910L1434 903M1434 903L1452 897L1470 891M1470 891L1485 886L1500 882M1522 874L1547 867M1382 944L1401 937M1401 937L1422 930L1443 922M1556 884L1575 877M1392 958L1411 951L1429 944M1480 926L1493 922M1404 975L1420 969L1437 963M1437 963L1453 957M1453 957L1471 950M1471 950L1490 944M1411 988L1427 982L1443 976M1467 967L1483 961L1499 955M1538 956L1556 949M1556 949L1578 942M1578 942L1591 937M1583 952L1595 948M1554 981L1561 978M1386 888L1393 906M1421 885L1432 911M1432 911L1439 927L1447 942M1482 954L1487 964M1479 881L1484 894M1484 894L1493 913L1502 933M1487 830L1493 849L1499 868M1538 868L1545 888L1553 907M1553 907L1565 933M1564 854L1571 876M1571 876L1573 881M1586 916L1591 926M1218 407L1237 403L1255 399M1255 399L1273 395L1291 391M1291 391L1311 386L1330 382M1352 376L1364 373M1364 373L1370 372M1233 449L1251 446M1251 446L1266 443M1305 434L1323 430M1318 484L1332 481M1332 481L1358 474M1358 474L1366 472M1267 405L1273 427M1280 451L1285 468L1290 486M1299 325L1307 349M1307 349L1313 367L1319 385M1468 476L1492 468M1492 468L1516 459M1527 529L1547 523M1526 565L1554 557M1554 557L1569 554M1569 554L1593 548M1593 548L1602 546M1540 669L1554 667M1569 665L1598 662M1571 620L1575 637L1580 654M1580 654L1584 672M1584 672L1587 687M639 502L657 492M657 492L720 486M720 486L732 492M789 466L840 475M840 475L850 461M850 461L902 457M1008 351L1026 374M1036 430L1042 470M1042 470L1039 501M1112 625L1120 652M1144 700L1153 727M1152 745L1120 751M1087 732L1065 736M1055 750L1095 847M1077 852L1067 897M1067 897L1047 888M1047 888L972 888M915 869L902 847M815 853L811 878M794 971L781 987M664 977L657 987M625 957L630 915M642 909L612 883M636 866L626 847M630 823L608 807M623 793L626 771M648 745L660 737M660 737L650 717M650 717L654 680M651 656L661 620M661 620L673 588M673 588L659 582M1089 464L1099 434M1209 387L1229 372M1500 367L1529 353M1537 378L1537 419M1531 427L1533 442M1619 606L1624 620M1624 620L1631 690M1540 686L1545 707M1545 707L1556 724M1550 840L1569 860M1579 871L1566 892M1566 892L1572 915M1547 972L1534 950M1534 950L1475 968M1475 968L1417 997M1404 976L1365 918M1365 918L1339 882M1261 801L1216 756M1152 612L1146 602M1140 587L1131 569M1128 557L1122 539M1110 500L1101 491M655 792L694 784L960 717L1095 675L1130 669M655 794L694 786L961 719L1096 677L1130 671M694 784L750 830L811 878M693 786L749 832L810 880M1045 652L1070 659L1092 665M1044 654L1069 661L1091 667M1092 625L1112 625L1118 652L1100 660L1092 640L1092 625M1142 423L1165 520L1200 650L1238 771M1140 423L1163 520L1198 651L1236 772M1164 644L1220 638L1283 631M1164 646L1220 640L1283 633M1393 630L1484 717L1549 756M1392 631L1483 719L1548 758M1195 791L1247 765M1196 793L1248 767M1404 646L1440 680L1482 714M1403 647L1439 682L1481 716M1238 335L1280 345L1320 372L1300 420M1238 337L1279 347L1318 373L1298 419M1358 444L1356 446L1352 447L1348 449L1343 449L1339 449L1334 448L1330 447L1327 445L1325 443L1324 441L1324 438L1326 436M1250 406L1248 404L1248 402L1248 399L1251 395L1254 392L1258 389L1263 386L1269 384L1274 383L1279 382M1276 477L1270 476L1266 474L1264 472L1265 469L1268 466L1273 464L1280 461L1288 459L1298 458L1307 458L1316 458L1324 459M1504 403L1503 402L1502 400L1501 397L1501 394L1501 391L1502 388L1503 385L1504 383L1506 381L1508 380L1510 380L1512 381L1513 382L1514 384M1466 431L1537 425M1548 576L1623 572L1630 688M1548 576L1550 640L1600 640L1605 688"/><path stroke="#38e88c" d="M1013 358L1013 358M988 382L1007 378L1026 374M965 399L985 395M965 411L986 407L1008 403M945 425L964 422M964 422L983 418L1002 414M1002 414L1020 411M902 443L921 440L939 436M644 499L666 496L687 493M844 469L856 467M933 468L950 465L967 462M967 462L988 458L1009 454M1009 454L1024 451L1039 448M657 525L678 523L698 520M698 520L717 517M717 517L738 514L759 511M841 498L860 495M860 495L888 490M888 490L910 487L932 483M661 538L677 536L694 533M694 533L715 530L737 527M701 543L716 541L731 539M662 583L691 579M691 579L703 577M703 577L721 575M721 575L746 571M719 599L740 595L762 592M762 592L783 589L805 586M1039 545L1057 542M815 597L833 594L851 591M726 620L744 618L762 615M896 592L920 588M920 588L935 585L950 583M950 583L969 579L989 575M744 633L766 630L788 626M1026 583L1052 578M1052 578L1066 576M665 661L684 658M684 658L704 654M704 654L722 651L740 648M740 648L759 645L778 642M967 606L991 601M991 601L1006 599L1022 596M1022 596L1042 592M1042 592L1058 589L1073 586M810 646L825 644M848 639L875 633M653 688L668 685M668 685L686 681M717 675L732 672M651 707L672 702L693 698M1012 628L1029 624M1029 624L1046 621M728 707L743 704L758 700M758 700L787 693M809 688L829 683L849 678M849 678L867 673L885 669M971 648L993 644L1014 639M1014 639L1039 634M775 707L795 701L816 696M1016 647L1038 642M1038 642L1057 638M1057 638L1081 633M1081 633L1096 630L1112 627M788 714L803 711L818 706M951 670L970 666L988 662M988 662L1007 657M740 743L763 736M763 736L776 732M776 732L798 726L819 720M862 708L880 703L897 697M897 697L912 693L927 689M1084 651L1102 647M1102 647L1118 644M724 766L745 760L765 753M765 753L782 748L800 743M823 736L845 730M845 730L858 726M874 721L899 713M991 687L1006 683L1021 679M1021 679L1042 674M1042 674L1061 670M1061 670L1082 665L1103 660M617 813L643 804M662 797L678 792M678 792L692 787L707 783M937 712L955 706L974 701M629 828L646 821L663 815M663 815L683 808L704 801M731 792L748 786L766 781M766 781L787 774M958 720L975 715L993 710M993 710L1008 705L1023 701M1023 701L1038 697L1054 693M1054 693L1070 689M1070 689L1089 684M660 836L677 829L694 823M694 823L706 818M706 818L727 811M727 811L747 804M747 804L765 798L782 793M811 783L826 779M857 769L884 760M932 745L950 739L969 733M889 774L911 767M1023 730L1039 725L1056 720M1098 707L1119 701L1141 696M1141 696L1142 695M690 860L708 852M735 842L760 833M760 833L780 826L801 819M893 788L912 782L931 776M931 776L949 769L968 763M1010 749L1027 743L1044 738M1044 738L1046 737M1056 734L1076 727M792 838L808 832L823 827M823 827L840 822L856 816M946 786L970 778M970 778L994 769M994 769L1021 760M1093 736L1114 729L1134 723M1134 723L1150 718M629 922L648 912L668 902M668 902L683 895L699 888M737 871L755 864L773 857M801 846L815 841M915 808L931 803L947 797M947 797L968 790L989 782M1052 760L1058 758M678 915L705 902M760 878L773 872M924 820L938 815M1025 784L1042 778L1059 771M1059 771L1063 770M646 951L670 937M727 907L742 901L756 894M757 908L784 896M941 840L957 834M957 834L973 828M973 828L1001 818M1001 818L1020 811L1038 804M1038 804L1064 795M652 982L664 975M779 913L799 905M710 967L728 956M752 943L778 930M1007 844L1030 835M1030 835L1056 825M1058 839L1079 831M1079 831L1087 828M766 988L784 977M784 977L793 972M1020 882L1037 875L1055 868M1058 893L1069 889M651 944L660 957M660 957L669 969M658 926L667 938L676 951M676 951L685 964L695 977M615 794L622 811M622 811L625 819M629 829L636 845M657 887L664 898M664 898L677 919M677 919L689 937M689 937L699 950L708 963M708 963L720 979M755 1003L759 1007M637 758L644 778L651 797M669 837L677 855L687 872M687 872L696 889M696 889L708 908L720 926M720 926L731 942L742 957M742 957L754 973L766 988M766 988L772 995M660 728L665 744L670 760M670 760L678 781M678 781L687 801M687 801L695 821L705 841M705 841L719 866M790 972L791 974M668 583L669 586M748 850L759 869L771 889M771 889L778 900M778 900L794 924M749 810L760 832M760 832L768 846L777 861M704 618L707 637L710 656M710 656L714 678L720 699M725 716L734 740M734 740L740 756L747 772M705 487L708 508M708 508L710 531M737 693L745 720M745 720L756 748M781 800L791 818L801 835M801 835L814 858M730 491L733 513L736 534M766 689L773 709M773 709L782 730L791 750M791 750L802 772M750 541L755 568M755 568L758 586L761 604M761 604L764 618M789 705L795 721L802 736M763 540L766 558L770 576M770 576L774 597L778 618M866 822L873 834M873 834L881 847L889 861M771 493L776 517M782 547L786 569L791 591M806 649L814 672M814 672L824 698M851 753L860 769L869 784M835 689L843 708M815 512L819 529M819 529L823 544M823 544L828 560L832 576M832 576L838 595L844 615M887 717L895 730M895 730L905 750M905 750L914 764L922 778M922 778L931 794L941 810M941 810L953 830M953 830L967 852M967 852L973 864M973 864L985 883M818 471L821 484M939 774L953 797M845 516L851 535L857 554M891 646L899 664M899 664L907 681L916 698M916 698L927 719M927 719L936 735L945 750M992 829L1002 846L1013 863M853 488L858 506L864 524M864 524L871 544L878 564M878 564L885 584L893 604M893 604L900 622M900 622L911 646M911 646L919 663M932 689L944 711M1011 825L1019 837M1005 782L1013 796M1013 796L1021 809M1029 823L1043 845M1043 845L1054 863L1066 881M1066 881L1069 887M874 459L881 480L889 501M971 690L982 709L993 728M993 728L1003 745L1013 762M1029 788L1039 805L1049 822M911 514L920 539M926 554L933 572M911 475L919 495L927 516M980 637L990 656M990 656L999 671L1007 687M915 447L921 462L927 477M927 477L934 497L942 516M942 516L950 536L958 556M958 556L964 569M914 401L925 428M933 450L937 461M937 461L945 482L953 503M953 503L959 515M959 515L967 535L976 555M982 571L993 593M957 480L964 497M976 529L982 541M982 541L990 560M1006 595L1020 621M1020 621L1028 637L1036 652M1043 636L1053 654L1062 671M1062 671L1073 689L1083 707M955 407L960 420M960 420L966 437L973 454M973 454L978 467M978 467L987 491M1022 538L1031 558L1040 577M1040 577L1050 597L1061 617M1061 617L1068 631L1076 645M1076 645L1084 658L1091 672M1091 672L1101 689L1112 707M1025 504L1032 520M1032 520L1039 535L1045 550M1045 550L1055 570M1055 570L1063 587M1063 587L1074 606L1084 626M1084 626L1093 642L1102 658M1102 658L1111 674L1120 690M1102 625L1111 640M1001 353L1009 375M1009 375L1015 390M1197 373L1202 372M1187 396L1215 389M1126 443L1141 440L1157 436M1157 436L1161 435M1092 471L1114 466L1135 461M1168 454L1186 451L1205 447M1133 490L1157 485M1157 485L1183 480M1183 480L1200 477L1217 474M1217 474L1233 471L1249 468M1213 485L1231 482L1249 478M1158 526L1176 523L1193 520M1230 521L1249 518L1267 515M1267 515L1290 511M1195 557L1221 553M1221 553L1242 550L1262 547M1229 561L1244 559M1244 559L1258 557M1139 586L1159 583L1179 580M1179 580L1194 578L1209 575M1152 613L1181 609M1181 609L1198 606M1198 606L1213 604L1229 602M1229 602L1243 600M1217 615L1237 612L1258 609M1176 631L1204 628M1183 642L1205 640M1205 640L1219 638M1239 635L1261 632L1282 629M1167 664L1196 660M1196 660L1217 657L1238 654M1238 654L1259 651L1279 648M1171 675L1195 672M1195 672L1210 670L1225 668M1225 668L1246 665L1267 662M1267 662L1290 659M1190 683L1209 680M1250 675L1269 672L1288 669M1219 689L1237 686L1256 684M1183 702L1200 699L1217 697M1217 697L1244 694M1244 694L1265 691L1287 688M1287 688L1290 687M1200 736L1217 734L1234 732M1234 732L1257 729M1255 795L1270 793L1286 791M1265 804L1290 800M1279 813L1290 811M1093 452L1098 473L1104 494M1117 489L1122 507L1126 525M1126 525L1130 541L1134 557M1134 557L1137 571M1149 555L1154 578M1154 578L1157 590M1157 590L1161 606L1165 621M1165 621L1171 647M1171 647L1175 665M1175 665L1180 682M1180 682L1186 705M1151 417L1155 434M1155 434L1160 450M1165 473L1169 487M1183 545L1187 562M1195 599L1200 622M1223 718L1227 731M1227 731L1233 752L1239 772M1239 772L1241 781M1239 658L1243 677M1243 677L1249 700M1249 700L1253 717L1257 735M1189 391L1195 414M1195 414L1200 429M1216 493L1221 515L1226 536M1210 398L1214 414L1219 429M1219 429L1224 449L1229 468M1243 525L1247 544L1251 564M1251 564L1255 578L1258 593M1258 593L1263 614L1267 636M1280 692L1285 713M1285 713L1290 734M1287 663L1290 675M1271 507L1276 527M1348 342L1362 339M1363 348L1376 345M1376 345L1398 340M1398 340L1426 333M1426 333L1431 332M1382 356L1403 351M1403 351L1430 344M1430 344L1442 341M1370 371L1397 365M1408 403L1425 399L1442 394M1451 406L1475 398M1475 398L1496 392L1516 386M1368 443L1380 440M1407 432L1432 425M1432 425L1452 419L1472 412M1446 433L1462 428M1409 454L1423 449M1423 449L1437 445M1437 445L1452 440L1466 436M1485 429L1501 424L1517 418M1370 426L1376 445L1383 464M1347 304L1353 321L1358 339M1358 339L1360 347M1374 340L1380 358M1380 358L1383 371M1407 397L1414 422M1414 422L1422 444M1450 351L1457 379M1471 421L1474 430M1501 386L1508 406L1515 425M1515 425L1516 427M1517 389L1522 404L1528 420M1528 420L1530 426M1290 489L1297 487M1290 516L1306 513M1290 544L1318 538M1334 535L1350 531M1330 548L1347 544M1312 561L1332 556L1353 552M1353 552L1365 549M1290 590L1313 586M1366 574L1370 573M1325 609L1338 606M1352 620L1370 616M1362 633L1370 631M1290 645L1291 650M1308 642L1309 650M1291 486L1297 508M1307 547L1311 563M1311 563L1316 582L1321 601M1321 601L1326 619M1326 619L1330 635L1334 650M1314 522L1319 539M1364 558L1370 576M1355 486L1360 502L1366 518M1366 518L1370 530M1370 485L1390 479L1410 473M1370 498L1390 492L1410 486M1450 472L1457 470M1388 500L1405 495M1405 495L1431 486M1370 514L1395 507M1395 507L1409 502L1424 497M1424 497L1442 491M1442 491L1469 482M1393 531L1418 523M1389 542L1416 533M1416 533L1440 525M1440 525L1456 520L1471 515M1471 515L1477 512M1370 555L1394 548M1394 548L1422 540M1438 561L1457 555L1476 549M1370 599L1385 596L1400 592M1400 592L1421 586M1421 586L1446 578M1370 607L1390 602L1410 596M1410 596L1434 590M1434 590L1452 584L1470 579M1509 567L1524 563M1458 589L1471 586M1471 586L1492 579L1514 573M1516 593L1540 587M1460 620L1474 616M1474 616L1486 613M1486 613L1510 607M1510 607L1528 603M1528 603L1540 600M1514 617L1531 614M1495 650L1513 647L1530 643M1378 617L1384 637M1370 519L1375 533L1381 548M1387 565L1394 585M1402 608L1408 626M1408 626L1413 641M1377 470L1384 489L1391 508M1404 540L1410 556M1410 556L1417 573M1417 573L1424 590L1430 608M1430 608L1437 628L1444 648M1444 648L1445 650M1392 470L1399 487L1405 503M1405 503L1413 522L1420 540M1434 574L1442 593M1442 593L1449 611L1455 629M1455 629L1462 650M1446 552L1454 571L1462 590M1468 554L1476 573L1484 592M1482 535L1490 552L1497 570M1497 570L1507 593M1494 518L1503 538L1512 558M1512 558L1517 571M1603 546L1605 551M1325 666L1353 661M1290 694L1307 691L1325 689M1325 689L1350 685M1350 685L1378 680M1510 654L1532 650M1290 703L1308 700L1327 698M1327 698L1355 693M1290 715L1310 712L1330 709M1330 709L1355 705M1355 705L1373 702L1391 699M1391 699L1410 696L1430 693M1290 725L1305 723L1321 721M1321 721L1336 718L1351 716M1407 707L1429 704L1452 700M1381 723L1401 720L1420 717M1420 717L1435 715L1450 712M1471 720L1498 716M1498 716L1515 714L1532 711M1532 711L1547 709M1290 755L1307 753L1324 751M1324 751L1351 747M1384 742L1405 739L1427 736M1427 736L1444 733L1460 731M1493 726L1509 724L1525 722M1331 759L1358 755M1396 750L1410 748M1290 792L1306 789L1322 787M1483 763L1497 761M1359 797L1388 793M1388 793L1400 791M1290 819L1307 817L1324 814M1506 783L1535 778M1377 830L1380 829M1519 830L1537 825M1537 825L1539 825M1300 739L1304 756L1307 772M1307 772L1313 796M1300 650L1305 670L1309 690M1346 758L1349 772M1353 790L1357 810L1362 830M1372 807L1376 821M1360 650L1364 665L1368 681M1414 727L1419 752M1419 752L1422 767M1422 767L1424 779M1425 699L1429 719L1433 738M1433 738L1437 759M1446 650L1452 670L1457 689M1457 689L1461 707L1465 724M1465 724L1469 749M1469 749L1473 770L1477 791M1534 712L1537 729L1540 746M1540 746L1542 761M1429 944L1457 934M1457 934L1480 926M1522 911L1536 906M1536 906L1558 899M1558 899L1567 896M1526 930L1546 923L1566 916M1443 976L1467 967M1577 927L1593 921M1447 942L1455 958L1463 974M1465 918L1473 936L1482 954M1473 864L1479 881M1499 868L1506 886M1506 886L1515 908M1515 908L1525 929M1565 933L1570 944M1570 944L1577 957M1577 957L1582 968M1223 362L1238 358M1266 443L1286 439L1305 434M1299 488L1318 484M1224 396L1228 412L1233 428M1233 428L1237 443L1241 459M1247 348L1254 367M1261 388L1267 405M1350 485L1351 486M1477 512L1495 506M1553 590L1581 584M1554 667L1569 665M1598 662L1627 659M1485 505L1490 517M1540 646L1545 666L1550 686M1587 687L1587 688M1422 844L1437 841L1452 837M1470 832L1486 829M1439 795L1444 816M732 492L752 500M904 399L964 408M964 408L967 388M1026 374L1020 396M1020 396L1036 430M1039 501L1057 541M1076 594L1085 612M1085 612L1092 625M1132 675L1144 700M1095 847L1077 852M939 891L915 869M811 878L794 915M741 990L716 977M612 883L636 866M626 847L630 823M608 807L592 805M599 796L623 793M626 771L648 745M1158 427L1161 437M1161 437L1162 449M1200 367L1209 387M1238 333L1279 321M1319 312L1346 304M1346 304L1385 291M1457 360L1492 378M1492 378L1500 367M1529 353L1537 378M1537 419L1531 427M1574 509L1586 531M1606 554L1619 606M1595 916L1589 931M1589 931L1602 968M1563 991L1547 972M1417 997L1404 976M1339 882L1307 840M1216 756L1193 727M1193 727L1182 700M1167 665L1164 645M1131 569L1128 557M1199 618L1300 560L1420 500L1538 445"/><path stroke="#2c98f0" d="M975 375L996 371L1018 366M928 418L946 415L965 411M713 489L724 488M652 512L670 510L688 507M688 507L709 504L729 501M729 501L748 498M763 496L778 494L793 492M661 549L681 546L701 543M689 555L718 551M718 551L733 549L748 547M748 547L762 545M762 545L783 541L804 538M660 572L679 570M679 570L700 567L721 564M721 564L740 561M740 561L756 559M776 556L802 552M978 522L1000 518L1022 514M862 553L880 550L898 547M898 547L923 543M923 543L940 540L958 537M958 537L983 532M787 578L802 576L816 574M816 574L832 571L847 569M921 556L939 553M805 586L824 583L843 579M855 599L876 596L896 592M778 642L799 638L820 634M820 634L841 630L863 626M719 663L734 661L750 658M732 672L758 668M758 668L776 664L795 660M897 652L918 647L939 643M660 736L678 731L697 726M839 690L860 684L882 678M882 678L900 674M1112 627L1113 627M639 755L665 748M665 748L678 744M927 689L950 683M690 776L707 771L724 766M776 761L791 757L805 752M805 752L823 747M823 747L844 741L864 734M864 734L885 728L905 721M905 721L921 717L937 712M987 697L1009 691M1009 691L1025 687M1001 723L1020 717L1040 711M998 738L1023 730M621 891L636 884L651 877M651 877L665 870M665 870L690 860M801 819L818 813L835 807M835 807L856 800L877 793M877 793L893 788M687 879L701 873L716 867M716 867L734 859M734 859L751 853L767 847M882 808L898 802L913 797M913 797L929 792L946 786M1040 753L1054 749M640 936L659 925L678 915M798 863L814 857M814 857L814 857M892 830L908 825L924 820M938 815L959 807M959 807L979 800L998 793M998 793L1025 784M695 924L705 918M705 918L727 907M971 816L989 810L1006 804M729 921L743 914L757 908M912 863L929 857L947 851M778 930L794 923M985 852L1007 844M771 951L783 944M933 885L951 879L968 873M738 988L749 982M749 982L764 973L779 965M1003 888L1020 882M1074 861L1075 860M659 977L662 980M631 914L641 929L651 944M625 780L632 799L639 818M678 894L690 914M690 914L706 938M675 821L683 840L692 858M719 904L730 920L740 935M740 935L749 947L758 960M758 960L776 982M719 866L734 892M734 892L745 909M745 909L756 925M658 630L661 651M661 651L666 679M666 679L669 693M669 693L674 713M674 713L681 735M681 735L687 752L693 768M661 492L663 507M663 507L665 536M665 536L666 557M666 557L668 583M777 861L788 879L799 897M770 819L784 845M722 623L725 641L728 659M728 659L732 676L737 693M719 486L722 508L725 530M725 530L726 545M726 545L730 574M730 574L735 603M735 603L737 615M752 687L757 703L763 719M772 655L777 670L781 685M787 654L792 671L798 689M776 517L779 535M814 574L819 592M819 592L823 605M871 726L881 745L892 764M821 484L828 507M836 537L840 551M971 827L979 840M979 840L987 853L995 866M1025 848L1038 868M1045 879L1051 890M926 639L933 655M946 680L952 691M952 691L962 709L972 727M915 570L923 591L932 611M898 481L904 497L911 514M950 610L957 625L964 639M964 639L975 660M962 599L971 618M971 618L980 637M925 428L933 450M1052 704L1061 719L1071 735M1059 693L1069 710L1080 728M1080 728L1083 733M1042 609L1052 628L1062 647M1120 690L1131 709L1143 728M1143 728L1152 744M1127 669L1140 692M1028 425L1034 440L1040 455M813 631L813 638M702 525L708 525M1124 669L1130 668M723 867L731 866M731 756L733 765M1038 784L1038 793M961 740L967 739M679 606L681 611M979 374L978 381M806 851L811 850M1104 682L1104 689M1003 846L1005 851M797 836L799 840M838 679L838 686M920 797L921 803M673 837L675 843M951 446L958 444M790 849L796 849M722 893L725 901M755 758L757 763M645 766L644 771M694 964L701 963M881 814L889 811M887 647L888 653M734 544L736 547M1072 801L1077 800M695 567L703 565M933 573L937 572M866 699L866 706M980 702L985 702M978 596L987 594M837 603L845 602M1004 839L1006 846M935 658L937 666M1090 680L1098 680M786 666L790 665M718 782L721 790M682 609L690 608M738 545L745 545M875 517L878 525M675 651L682 651M955 697L956 703M682 661L682 668M963 739L967 739M663 810L666 818M1112 724L1118 723M694 974L701 973M1035 865L1038 870M952 888L958 887M1102 650L1103 656M995 812L1000 811M770 693L778 692M759 612L761 618M903 505L904 509M1070 606L1073 613M914 572L916 579M809 752L809 757M737 675L741 674M995 688L1002 686M684 627L690 626M1061 856L1063 862M768 599L777 598M743 933L751 933M973 760L973 769M929 675L933 675M865 652L874 652M794 470L800 469M883 583L884 589M1182 406L1199 402L1217 398M1094 450L1110 447L1126 443M1117 455L1140 450M1207 436L1224 433M1135 461L1152 458L1168 454M1205 447L1227 442M1113 512L1126 509M1267 484L1273 483M1122 518L1141 514L1160 511M1160 511L1179 507L1198 504M1198 504L1213 501M1213 501L1231 498M1231 498L1250 495L1270 492M1166 541L1188 537L1210 534M1210 534L1234 530M1234 530L1252 527L1269 524M1129 559L1141 557M1233 542L1249 540L1265 537M1265 537L1290 533M1173 561L1195 557M1262 547L1275 545M1170 570L1189 567M1189 567L1208 565M1143 593L1159 591L1175 588M1269 586L1290 582M1243 600L1263 597L1283 594M1283 594L1290 593M1164 645L1183 642M1256 684L1275 681M1275 681L1290 679M1187 711L1211 708M1211 708L1228 706M1228 706L1257 702M1257 702L1279 699M1279 699L1290 697M1257 729L1273 727L1290 725M1244 784L1266 782L1288 779M1286 791L1290 790M1107 452L1112 468M1139 515L1144 535L1149 555M1211 668L1214 681M1187 490L1191 508L1196 525M1207 577L1211 595M1211 595L1216 615M1216 615L1219 630L1223 645M1223 645L1227 666L1232 687M1192 454L1196 473L1201 491M1279 542L1284 564M1277 483L1282 503L1287 523M1159 469L1165 467M1167 568L1174 567M1178 662L1184 661M1221 482L1226 482M1105 451L1106 459M1112 465L1115 471M1166 511L1168 516M1265 510L1266 515M1234 530L1236 538M1277 522L1281 528M1123 433L1123 442M1224 682L1228 689M1249 607L1248 614M1216 628L1223 626M1166 634L1166 642M1268 636L1275 635M1207 501L1208 507M1180 472L1184 471M1290 323L1307 319M1362 339L1383 334L1405 329M1405 329L1422 325M1402 377L1421 372M1421 372L1448 365M1398 391L1413 387M1413 387L1426 384M1464 387L1493 379M1493 379L1519 371M1519 371L1533 367M1462 428L1481 422M1367 466L1392 459M1444 470L1468 462M1362 299L1368 319L1374 340M1394 407L1398 419M1400 332L1405 353M1405 353L1409 365M1405 288L1411 310M1411 310L1415 325L1419 341M1434 394L1440 414L1447 434M1456 456L1462 470M1453 406L1460 425L1467 443M1467 443L1467 443M1485 375L1491 392M1497 410L1503 428M1509 363L1517 389M1529 376L1533 390M1533 390L1537 401M1339 318L1343 326M1395 371L1396 378M1384 431L1392 430M1410 381L1411 386M1422 447L1426 446M1432 341L1438 340M1459 427L1460 431M1506 413L1511 411M1411 307L1415 314M1353 303L1360 303M1329 524L1357 518M1357 518L1370 514M1318 538L1334 535M1313 586L1333 582M1333 582L1349 578L1366 574M1290 601L1311 597L1332 593M1332 593L1349 590L1366 586M1338 606L1354 603L1370 599M1303 644L1318 641L1334 639M1344 565L1348 579M1294 614L1300 613M1362 561L1370 560M1335 520L1344 519M1328 510L1328 517M1370 525L1384 521L1399 517M1418 523L1431 519M1428 547L1450 540L1471 533M1471 533L1483 529M1483 529L1501 522M1460 547L1475 542L1489 537M1489 537L1506 531M1569 511L1574 510M1421 566L1438 561M1489 544L1509 538M1446 578L1465 573L1483 567M1391 608L1417 601M1417 601L1444 593M1444 593L1458 589M1528 582L1540 579M1413 650L1434 645L1454 641M1454 641L1469 637L1485 634M1411 470L1418 487L1425 504M1425 504L1432 522L1440 540M1462 590L1466 602M1466 602L1471 615M1471 510L1482 535M1573 509L1578 521M1414 521L1415 526M1432 479L1438 478M1486 590L1486 596M1440 629L1445 628M1482 623L1482 628M1387 495L1389 504M1438 518L1438 525M1425 638L1425 645M1445 512L1450 512M1442 629L1450 627M1290 662L1308 659L1327 656M1327 656L1343 653L1359 650M1290 671L1308 668L1325 666M1322 679L1343 676L1364 672M1364 672L1384 668L1404 664M1406 684L1422 681L1438 678M1617 690L1622 690M1351 747L1367 745L1384 742M1460 731L1476 729L1493 726M1525 722L1539 720M1410 748L1430 745M1506 746L1534 742M1534 742L1554 740M1290 808L1306 805L1322 803M1322 803L1340 800L1359 797M1310 830L1328 827L1346 824M1346 824L1369 820M1313 796L1317 813L1322 830M1316 719L1320 737L1324 755M1324 755L1329 776L1333 798M1333 798L1339 822M1339 822L1341 830M1368 681L1372 695L1375 710M1477 791L1479 800M1509 768L1513 789L1517 809M1517 809L1522 830M1507 668L1512 687M1512 687L1515 703M1515 703L1520 724L1523 746M1523 746L1526 763L1529 779M1538 650L1540 657M1391 695L1395 695M1301 668L1307 667M1471 700L1475 699M1374 807L1375 812M1447 661L1447 665M1525 818L1532 818M1340 695L1344 703M1304 755L1312 753M1327 781L1333 780M1361 684L1368 684M1326 674L1327 679M1516 708L1519 714M1462 747L1462 753M1507 796L1507 804M1487 870L1507 864L1528 857M1493 922L1507 917L1522 911M1499 955L1525 945M1525 945L1542 939M1588 968L1600 964M1337 869L1344 888M1525 929L1533 945L1541 962M1541 962L1543 965M1464 891L1471 889M1412 942L1419 942M1542 890L1544 895M1520 877L1528 877M1584 926L1591 925M1532 917L1535 922M1351 849L1358 847M1519 953L1520 958M1526 917L1531 915M1238 358L1257 354L1276 349M1276 349L1296 344M1319 385L1325 404L1331 423M1331 423L1335 438L1340 453M1319 438L1321 446M1324 430L1325 435M1359 396L1364 396M1547 523L1570 516M1570 516L1573 515M1613 631L1622 630M1493 429L1498 441M1505 458L1512 473L1520 489M1562 592L1566 604M1542 483L1543 491M1395 856L1404 881M752 500L775 492M775 492L789 466M967 388L986 356M986 356L1008 351M1057 541L1076 594M1120 751L1087 732M1065 736L1042 730M752 1013L741 990M716 977L664 977M657 987L625 957M630 915L642 909M659 582L662 541M1218 354L1238 333M1385 291L1403 286M1403 286L1415 295M1421 324L1440 339M1563 505L1574 509M1553 746L1543 759M1543 759L1534 779M1534 779L1517 797M1572 915L1595 916M1560 968L1563 991M1164 645L1152 612M1122 518L1110 509M972 887L1040 862L1094 842M973 889L1041 864L1095 844M1046 727L1060 760L1080 805L1094 845M1044 728L1058 761L1078 806L1092 846M1088 613L1120 600L1150 592M630 483L645 485L657 492M1274 479L1278 560L1283 630L1295 824M1272 479L1276 560L1281 630L1293 824M1174 765L1184 766L1200 779M1341 417L1334 417L1326 417L1319 415L1313 413L1308 411L1304 408L1302 405L1302 401L1304 399L1308 396L1313 394L1319 393L1326 393M1263 433L1264 437L1264 441L1263 446L1262 449L1260 452L1257 455L1254 456L1251 456L1248 455L1245 453L1243 450L1241 447L1240 443L1240 439M1306 365L1299 364L1291 362L1283 359L1276 356L1269 352L1264 348L1261 345L1260 342L1261 340L1263 339L1268 338L1274 339M1342 400L1339 397L1337 393L1336 388L1336 382L1336 376L1338 371L1341 366L1344 362L1347 360M1247 367L1251 371L1254 376L1256 382L1257 388L1257 394L1256 399L1253 404L1250 407L1246 408L1242 408L1238 406L1233 403M1521 409L1518 411L1515 413L1512 413L1509 412L1506 409L1504 406L1503 402L1503 398L1503 393L1504 388L1506 384L1509 381L1512 379L1515 377L1518 377L1521 378M1474 469L1475 467L1477 465L1480 463L1484 462L1488 461L1492 461L1496 462L1500 463L1503 464L1505 466L1506 469L1506 471L1505 473L1503 475M1506 450L1508 449L1510 448L1512 448L1514 448L1517 449L1518 450L1520 452L1521 453L1521 455L1521 457L1520 459L1518 460L1516 461L1514 462L1512 462L1510 462M1467 493L1466 491L1466 489L1467 487L1468 485L1471 484L1473 483L1476 482L1479 482L1482 483L1485 484L1487 485L1489 487L1490 489L1490 491M1480 445L1540 430M1520 545L1604 546"/><path stroke="#a8ec28" d="M939 436L954 434M856 467L874 464M874 464L890 462M890 462L912 458L934 454M934 454L949 451L964 448M964 448L985 444L1006 440M1006 440L1018 438M972 476L987 473L1002 470M1014 467L1041 462M769 533L787 531M787 531L803 528M803 528L821 526L839 523M839 523L860 519L881 516M881 516L896 513M896 513L917 510M917 510L946 505M946 505L968 501M968 501L989 497L1009 493M1009 493L1025 490L1040 487M804 538L830 534M830 534L857 530M932 530L947 528L962 525M962 525L978 522M1022 514L1043 510M721 612L741 609M741 609L757 606M757 606L774 604L791 601M791 601L815 597M851 591L870 588L889 585M889 585L907 581M653 648L668 645M668 645L682 643M863 626L884 622L905 618M927 623L949 619L971 614M736 689L765 682M765 682L785 678M785 678L804 674L823 669M900 674L917 669L935 665M935 665L954 660L974 656M644 771L665 764M665 764L685 758M640 793L656 787L673 782M673 782L690 776M858 726L874 721M1118 657L1122 656M729 775L757 767M884 760L897 756M897 756L914 750M914 750L932 745M651 896L672 886M672 886L687 879M699 888L718 879L737 871M1105 742L1121 737M1121 737L1137 731L1153 726M783 883L802 875M802 875L812 872M661 959L681 947M681 947L698 938L715 928M728 956L752 943M756 958L771 951M783 944L794 939M1088 843L1093 841M635 943L647 960L659 977M669 969L675 977M636 845L644 863M776 982L780 988M756 925L770 945M770 945L780 958L790 972M693 768L703 794M764 906L772 918M772 918L783 933L794 949M799 897L801 900M784 845L796 865M764 765L772 783L781 800M821 835L834 857M802 772L815 797M822 809L834 830M781 685L789 705M826 783L834 797L842 811M842 811L852 829L863 847M891 822L905 846M905 846L913 859L920 871M785 513L790 532L794 551M940 879L947 890M985 883L988 888M840 551L848 575M848 575L853 590L858 605M858 605L864 622L870 640M930 759L939 774M832 474L839 495L845 516M869 591L875 607M875 607L883 627L891 646M1013 863L1019 873M975 765L988 787M1019 837L1025 848M972 727L981 742L990 757M889 501L895 519M895 519L900 532M1049 822L1059 838L1068 853M1068 853L1075 863M933 530L939 545L945 560M945 560L954 581M903 415L909 431L915 447M996 635L1002 647M1002 647L1016 672M942 442L949 461L957 480M948 420L953 435L959 450M993 506L1001 524L1009 542M1009 542L1015 556L1022 569M1062 647L1070 661L1077 674M1077 674L1086 690M1086 690L1096 707L1106 724M1106 724L1114 737L1122 750M1122 750L1122 751M1112 707L1124 728M1124 728L1136 748M986 403L995 428M995 428L1003 448M1003 448L1013 473M1013 473L1018 487M1090 461L1117 455M1110 504L1128 501L1146 497M1146 497L1171 492M1171 492L1192 489L1213 485M1122 533L1135 530M1275 545L1290 542M1258 557L1282 553M1282 553L1290 552M1164 601L1192 597M1204 628L1225 625L1245 622M1245 622L1266 619L1286 616M1286 616L1290 615M1166 656L1184 653L1203 651M1234 647L1249 645L1265 642M1265 642L1283 640M1283 640L1290 639M1288 669L1290 669M1179 694L1196 692M1196 692L1219 689M1232 715L1245 714M1278 718L1290 717M1244 751L1267 748L1289 745M1289 745L1290 745M1238 778L1261 775M1261 775L1279 773M1102 433L1107 452M1180 410L1184 426L1188 442M1188 442L1192 454M1216 558L1220 574L1224 590M1224 590L1229 616M1229 616L1234 637L1239 658M1226 536L1229 551M1252 653L1256 672M1256 672L1260 688L1263 703M1239 456L1242 469M1242 469L1247 486M1247 486L1250 499M1250 499L1254 516L1257 532M1257 532L1262 553L1267 574M1267 574L1270 589L1274 605M1274 605L1278 621L1281 638M1246 331L1247 335M1518 358L1530 355M1431 411L1451 406M1510 400L1537 391M1314 315L1320 332M1371 382L1376 399M1376 399L1382 418L1388 436M1407 445L1416 470M1395 355L1401 376L1407 397M1466 365L1471 382L1476 400M1476 400L1482 416M1290 500L1310 496L1330 492M1330 492L1351 486M1365 483L1370 481M1290 532L1306 529M1306 529L1329 524M1347 544L1370 538M1290 576L1308 573L1326 569M1290 615L1307 612L1325 609M1290 631L1314 627M1321 489L1326 506L1331 523M1341 487L1347 507L1354 527M1354 527L1359 543L1364 558M1370 505L1388 500M1450 513L1462 508M1422 540L1438 534M1438 534L1457 528L1475 522M1442 553L1460 547M1370 624L1396 617M1396 617L1415 613L1433 608M1433 608L1445 605M1507 587L1528 582M1370 631L1387 627L1404 623M1404 623L1424 618L1445 612M1504 596L1516 593M1403 634L1428 628M1428 628L1444 624L1460 620M1474 627L1494 622L1514 617M1501 630L1529 624M1450 650L1466 647L1481 643M1512 637L1539 632M1495 621L1499 635L1504 650M1532 610L1537 627M1537 627L1540 636M1290 684L1306 681L1322 679M1472 661L1491 657L1510 654M1526 676L1540 674M1465 698L1486 694L1507 691M1497 761L1511 758M1511 758L1527 756M1527 756L1548 753M1324 814L1348 810M1348 810L1367 807L1385 804M1385 804L1394 803M1438 795L1457 791L1475 788M1475 788L1490 785L1506 783M1369 820L1387 816M1475 799L1499 795M1499 795L1520 791M1520 791L1524 790M1409 703L1414 727M1426 650L1431 669L1436 688M1436 688L1441 707L1445 727M1445 727L1448 744L1451 762M1451 762L1455 780M1461 650L1468 674M1468 674L1473 695L1477 716M1477 716L1482 740M1338 881L1353 877M1353 877L1372 872L1391 867M1391 867L1394 866M1359 910L1374 905L1389 901M1389 901L1414 893M1414 893L1430 888M1547 867L1569 860M1481 909L1498 903L1515 897M1515 897L1535 891L1556 884M1566 916L1572 914M1542 939L1559 933L1577 927M1544 967L1563 959L1583 952M1367 830L1372 847L1377 864M1393 906L1401 923M1401 923L1408 938M1408 938L1419 960M1502 933L1514 956M1514 956L1514 956M1527 830L1532 849L1538 868M1243 336L1247 348M1587 634L1613 631M1389 852L1405 848L1422 844M1385 820L1390 838L1395 856M1444 816L1448 831M1448 831L1452 846L1457 861M1318 639L1400 720L1484 801L1516 879L1561 989"/><path stroke="#4060ff" d="M929 530L935 529M794 639L796 645M1009 412L1017 412M775 621L775 626M1025 808L1029 807M748 666L756 666M1006 618L1007 623M978 454L983 453M991 653L993 659M1039 609L1041 616M782 660L783 669M895 802L896 807M956 659L957 668M772 984L779 982M851 646L851 655M687 792L690 801M1119 686L1120 694M868 599L871 607M926 738L932 737M716 623L722 621M999 809L1000 816M720 491L728 491M938 497L938 503M805 469L809 469M988 495L988 503M953 814L961 812M692 515L698 513M992 686L999 685M952 768L953 772M1105 661L1106 665M1124 720L1131 720M675 781L675 785M1091 643L1095 642M698 914L707 914M744 981L744 988M847 653L850 659M935 689L937 694M794 844L795 853M861 607L868 607M754 676L760 675M959 550L966 550M835 853L842 853M652 510L652 517M979 731L986 729M659 577L663 585M908 705L910 713M1019 525L1020 530M1003 783L1010 781M677 910L678 917M784 692L786 697M1031 437L1038 436M885 850L891 848M686 840L688 844M1027 862L1036 862M887 619L891 617M883 468L886 475M1010 440L1014 439M940 453L943 459M1070 597L1074 596M764 911L766 919M884 467L892 467M692 820L697 818M980 584L983 590M756 640L764 639M884 696L884 702M943 570L949 569M838 650L844 649M952 635L954 641M1061 813L1062 817M697 495L697 500M1247 531L1246 538M1211 439L1212 446M1257 559L1265 558M1262 783L1264 788M1196 531L1202 530M1243 548L1249 547M1194 702L1195 707M1279 750L1283 749M1171 548L1179 546M1143 423L1145 428M1255 718L1260 717M1215 465L1216 472M1197 383L1204 383M1142 516L1145 522M1289 774L1289 781M1380 360L1381 365M1378 303L1380 307M1404 378L1410 378M1390 468L1391 473M1427 411L1429 417M1407 308L1410 316M1353 490L1355 495M1478 599L1486 597M1534 617L1538 616M1442 473L1448 472M1455 613L1459 612M1459 589L1460 594M1430 495L1431 501M1474 640L1481 639M1426 536L1425 544M1504 593L1504 597M1506 570L1505 578M1482 780L1484 787M1342 733L1349 733M1346 799L1348 805M1494 811L1499 810M1295 695L1304 693M1399 721L1405 719M1439 700L1444 698M1494 659L1499 658M1497 796L1497 800M1348 690L1349 698M1498 687L1498 694M1337 724L1339 730M1311 700L1319 698M1519 761L1525 759M1408 752L1410 757M1500 723L1500 729M1411 730L1415 729M1328 754L1337 752M1401 918L1406 918M1496 893L1500 900M1539 840L1543 840M1524 893L1533 893M1543 954L1550 952M1564 858L1571 856M1507 834L1512 834M1491 895L1495 895M1234 370L1239 368M1248 448L1256 445M1575 593L1575 601M1521 470L1526 469M1471 443L1472 448M1488 851L1490 858"/><path stroke="#3080f0" d="M775 804L782 803M863 484L863 489M697 686L700 693M847 688L855 686M842 707L846 707M762 812L764 818M1016 500L1022 499M885 847L885 854M1009 820L1011 825M1008 786L1008 794M941 766L943 771M867 548L868 553M929 667L931 676M844 798L851 798M710 654L710 658M966 518L967 522M681 654L688 651M915 847L915 854M902 563L909 561M915 637L921 635M752 980L759 980M853 463L853 468M918 408L924 408M830 634L836 632M1048 634L1052 640M871 828L871 837M738 914L747 913M997 740L1002 739M794 705L797 709M757 707L761 713M955 629L961 628M653 815L653 819M898 673L902 673M801 512L802 518M855 545L855 552M811 533L812 537M1022 378L1028 377M1020 872L1021 878M951 488L960 487M901 847L904 854M1105 645L1111 644M721 891L723 895M852 855L852 861M925 654L930 653M944 775L944 779M811 634L820 633M856 774L858 778M659 962L663 961M666 710L675 709M727 710L727 716M658 704L660 710M765 520L772 519M1067 575L1072 575M770 531L775 530M723 888L725 894M746 708L746 715M957 856L964 855M692 713L698 712M1039 693L1040 699M958 603L961 609M1060 732L1068 730M885 618L892 617M693 793L697 800M884 492L884 500M949 861L950 867M893 697L901 696M1069 589L1076 588M1047 803L1052 803M887 517L892 517M936 547L940 547M710 803L716 801M724 755L727 764M996 357L1002 355M842 489L844 494M745 641L751 640M734 542L734 549M850 662L856 660M897 522L905 520M746 670L754 668M760 889L765 888M770 791L771 798M801 864L807 862M668 548L674 547M886 493L890 501M683 950L689 950M723 889L725 896M1137 515L1137 523M1258 564L1260 570M1248 696L1254 695M1273 619L1275 627M1287 516L1288 521M1113 511L1120 509M1215 640L1215 647M1187 441L1191 440M1131 480L1134 486M1260 678L1262 685M1173 585L1177 584M1153 608L1157 607M1211 613L1213 621M1138 432L1138 440M1207 641L1214 640M1287 761L1290 768M1438 407L1437 413M1400 289L1408 289M1306 320L1308 326M1503 381L1505 386M1372 350L1378 350M1372 457L1376 456M1399 352L1404 351M1494 388L1493 393M1326 554L1334 554M1359 635L1365 635M1320 489L1324 489M1346 499L1346 506M1294 519L1298 517M1305 615L1308 621M1312 524L1312 529M1352 633L1353 641M1472 549L1474 554M1423 614L1426 621M1407 572L1409 578M1397 519L1404 518M1530 605L1538 605M1488 588L1495 587M1379 568L1385 567M1405 583L1412 582M1513 613L1517 620M1407 761L1415 761M1412 763L1415 771M1464 672L1466 676M1443 774L1448 774M1352 727L1360 724M1366 800L1369 806M1522 733L1522 742M1332 746L1334 752M1544 705L1544 712M1307 712L1312 710M1362 692L1362 697M1513 733L1515 738M1501 856L1501 865M1531 872L1536 871M1380 858L1380 867M1513 943L1513 950M1371 925L1374 930M1471 928L1477 927M1413 904L1421 903M1447 959L1450 967M1613 688L1619 687M1536 498L1537 505M1443 858L1444 862"/><path stroke="#20c0e0" d="M970 510L976 509M717 764L720 770M1003 519L1005 526M884 595L886 603M1013 441L1020 440M887 473L889 479M833 770L833 776M881 539L888 537M721 926L723 931M901 628L903 632M1038 585L1047 584M796 568L799 572M801 800L809 799M987 842L986 849M1075 687L1084 686M737 860L743 860M793 640L800 638M885 553L888 557M948 726L954 724M754 983L758 981M1009 407L1012 412M862 746L866 745M766 748L772 747M844 670L850 668M916 498L917 503M896 644L899 653M752 801L757 800M1006 594L1008 600M993 838L999 837M1038 841L1041 846M690 582L694 588M1051 668L1054 676M832 734L834 741M665 935L667 942M948 636L951 642M971 514L977 513M725 593L727 596M942 457L946 457M755 800L757 808M1008 588L1013 587M968 523L971 530M832 801L834 805M891 461L892 469M751 677L754 685M1041 711L1049 710M637 875L644 873M722 903L728 902M738 591L739 595M966 599L967 603M683 502L685 509M1086 715L1088 722M917 702L922 702M781 937L786 937M678 593L683 592M857 716L861 716M819 569L824 568M706 592L706 597M704 786L704 792M907 649L907 654M1026 661L1030 667M838 549L844 548M684 657L686 662M726 792L733 792M627 810L634 808M773 846L776 854M868 635L875 634M1013 397L1021 394M681 915L682 919M1063 568L1068 566M1204 713L1208 713M1180 561L1184 569M1278 693L1283 692M1246 750L1254 749M1273 605L1274 613M1212 683L1214 688M1261 716L1266 714M1162 498L1169 496M1254 780L1256 787M1154 550L1160 549M1108 439L1116 437M1207 705L1210 714M1204 618L1208 617M1194 551L1202 549M1141 421L1149 419M1288 676L1292 676M1274 634L1281 634M1213 456L1215 463M1179 455L1178 464M1272 577L1272 586M1219 730L1226 727M1257 735L1259 740M1348 328L1356 326M1447 429L1448 434M1364 310L1367 316M1387 435L1391 434M1346 323L1349 331M1399 381L1399 387M1328 639L1333 639M1298 645L1302 653M1340 496L1345 494M1320 597L1324 596M1294 647L1296 653M1401 489L1401 494M1500 650L1507 649M1520 561L1521 569M1512 633L1519 632M1465 585L1467 589M1459 506L1466 505M1454 598L1461 597M1447 588L1452 588M1389 769L1390 777M1361 800L1368 799M1475 707L1479 706M1325 658L1330 657M1382 748L1387 747M1321 685L1321 694M1352 701L1353 706M1462 762L1470 760M1336 679L1335 688M1410 714L1417 711M1392 769L1397 767M1470 724L1471 731M1303 828L1307 827M1323 678L1328 678M1329 715L1337 713M1420 991L1425 989M1553 973L1561 970M1514 846L1518 853M1532 898L1532 902M1555 867L1559 867M1302 419L1302 424M1299 465L1300 473M1560 648L1566 646"/></g></svg>

<!-- red highlight -->
<div class="a" style="left:0;top:648px;width:226px;height:42px;border:6px solid #e31b23"></div>
</body></html>
